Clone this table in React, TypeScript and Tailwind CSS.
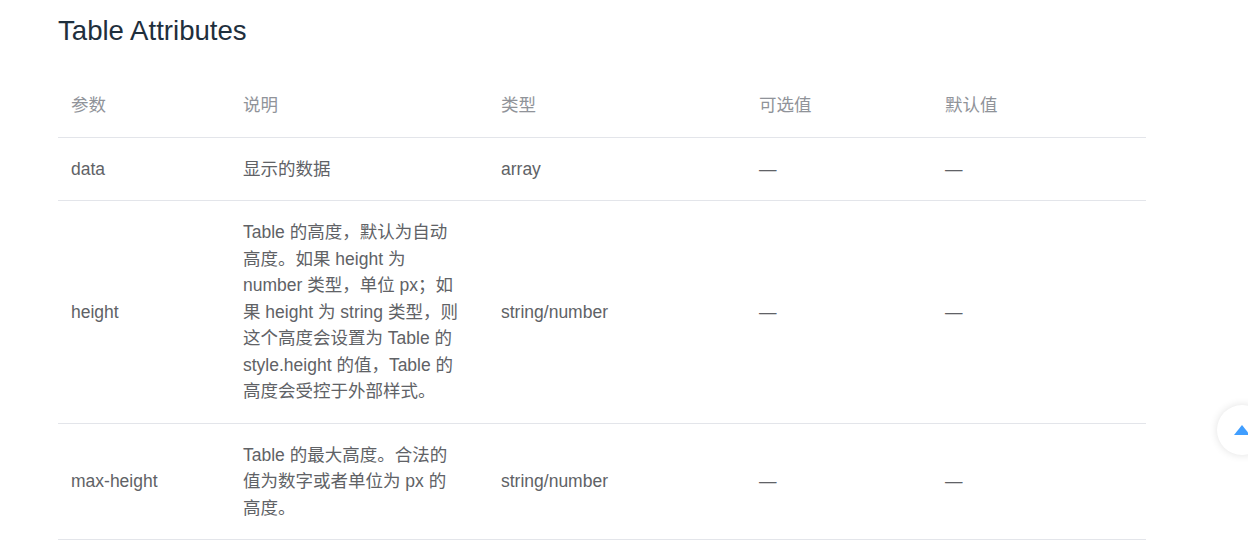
import React from "react";

const rows = [
  {
    name: "data",
    desc: ["显示的数据"],
    type: "array",
  },
  {
    name: "height",
    desc: [
      "Table 的高度，默认为自动",
      "高度。如果 height 为",
      "number 类型，单位 px；如",
      "果 height 为 string 类型，则",
      "这个高度会设置为 Table 的",
      "style.height 的值，Table 的",
      "高度会受控于外部样式。",
    ],
    type: "string/number",
  },
  {
    name: "max-height",
    desc: ["Table 的最大高度。合法的", "值为数字或者单位为 px 的", "高度。"],
    type: "string/number",
  },
];

const cell = "px-[13px] py-[18px] text-left align-middle";

const App = () => {
  return (
    <div
      className="relative h-[544px] w-[1248px] overflow-hidden bg-white"
      style={{ fontFamily: '"Liberation Sans", "Noto Sans CJK SC", sans-serif' }}
    >
      <div className="pl-[58px] pt-[14px]">
        <h3 className="text-[27.6px] leading-[34px] font-normal text-[#1f2f3d]">
          Table Attributes
        </h3>
        <table className="mt-[26px] w-[1088px] table-fixed border-collapse text-[17.5px] leading-[26.5px]">
          <colgroup>
            <col className="w-[172px]" />
            <col className="w-[258px]" />
            <col className="w-[258px]" />
            <col className="w-[186px]" />
            <col className="w-[214px]" />
          </colgroup>
          <thead>
            <tr className="border-b border-[#e3e5ea] text-[#909399]">
              <th className={`${cell} font-normal`}>参数</th>
              <th className={`${cell} font-normal`}>说明</th>
              <th className={`${cell} font-normal`}>类型</th>
              <th className={`${cell} font-normal`}>可选值</th>
              <th className={`${cell} font-normal`}>默认值</th>
            </tr>
          </thead>
          <tbody className="text-[#606266]">
            {rows.map((r) => (
              <tr key={r.name} className="border-b border-[#e3e5ea]">
                <td className={cell}>{r.name}</td>
                <td className={`${cell} whitespace-nowrap`}>
                  {r.desc.map((line, i) => (
                    <div key={i}>{line}</div>
                  ))}
                </td>
                <td className={cell}>{r.type}</td>
                <td className={cell}>—</td>
                <td className={cell}>—</td>
              </tr>
            ))}
          </tbody>
        </table>
      </div>

      {/* back to top */}
      <div className="absolute left-[1217px] top-[405px] flex h-[50px] w-[50px] items-center justify-center rounded-full bg-white shadow-[0_0_8px_rgba(0,0,0,0.12)]">
        <svg width="16" height="10" viewBox="0 0 16 10" className="-ml-[1px]">
          <path d="M8 0 L16 10 L0 10 Z" fill="#409eff" />
        </svg>
      </div>
    </div>
  );
};

export default App;
